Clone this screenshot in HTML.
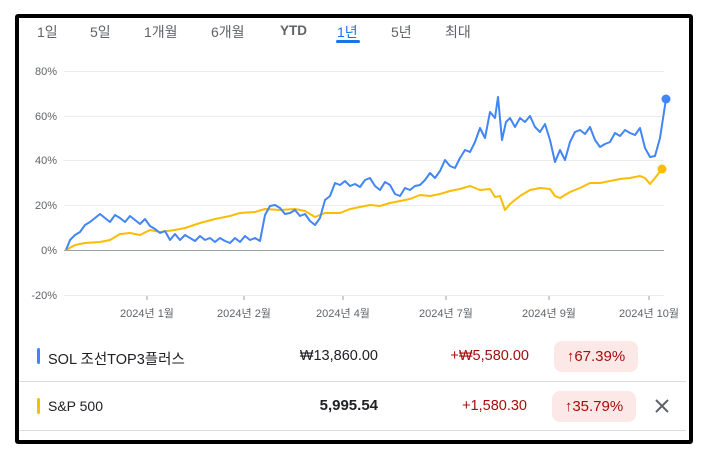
<!DOCTYPE html>
<html><head><meta charset="utf-8"><style>
body{margin:0;width:708px;height:459px;background:#fff;font-family:"Liberation Sans","Noto Sans CJK KR",sans-serif;position:relative;overflow:hidden}
.frame{position:absolute;left:15px;top:14px;width:670px;height:422px;border:4px solid #000;border-radius:3px;background:#fff}
.t{position:absolute;top:22px;font-size:14px;color:#5f6368}
.sel{color:#1a73e8}
.ul{position:absolute;left:336px;top:40px;width:24px;height:3px;background:#1a73e8;border-radius:2px}
.r{position:absolute;font-size:14.5px;color:#202124}
.red{color:#a50e0e}
.badge{position:absolute;width:84px;height:31px;background:#fce8e6;border-radius:8px;color:#a50e0e;font-size:15px;line-height:31px;text-align:center}
.sep{position:absolute;left:19px;width:667px;height:1px;background:#dadce0}
</style></head><body>
<div class="frame"></div>
<span class="t" style="left:37px">1일</span>
<span class="t" style="left:90px">5일</span>
<span class="t" style="left:144px">1개월</span>
<span class="t" style="left:211px">6개월</span>
<span class="t" style="left:280px;top:23px;font-weight:bold;font-size:13.5px">YTD</span>
<span class="t sel" style="left:337px">1년</span>
<span class="t" style="left:391px">5년</span>
<span class="t" style="left:445px">최대</span>
<div class="ul"></div>
<svg style="position:absolute;left:0;top:0" width="708" height="340">
<g stroke="#ececec" stroke-width="1">
<line x1="64" y1="71.5" x2="664" y2="71.5"/><line x1="64" y1="116.5" x2="664" y2="116.5"/><line x1="64" y1="160.5" x2="664" y2="160.5"/><line x1="64" y1="205.5" x2="664" y2="205.5"/><line x1="64" y1="295.5" x2="664" y2="295.5"/>
</g>
<line x1="64" y1="250.5" x2="664" y2="250.5" stroke="#9aa0a6"/>
<g stroke="#9aa0a6"><line x1="147" y1="296" x2="147" y2="300"/><line x1="244" y1="296" x2="244" y2="300"/><line x1="343" y1="296" x2="343" y2="300"/><line x1="446" y1="296" x2="446" y2="300"/><line x1="549" y1="296" x2="549" y2="300"/><line x1="649" y1="296" x2="649" y2="300"/></g>
<g font-size="11" fill="#5f6368" font-family="Liberation Sans,Noto Sans CJK KR,sans-serif">
<text x="57" y="75" text-anchor="end">80%</text><text x="57" y="120" text-anchor="end">60%</text><text x="57" y="164" text-anchor="end">40%</text><text x="57" y="209" text-anchor="end">20%</text><text x="57" y="254" text-anchor="end">0%</text><text x="57" y="299" text-anchor="end">-20%</text>
<g text-anchor="middle"><text x="147" y="317">2024년 1월</text><text x="244" y="317">2024년 2월</text><text x="343" y="317">2024년 4월</text><text x="446" y="317">2024년 7월</text><text x="549" y="317">2024년 9월</text><text x="649" y="317">2024년 10월</text></g>
</g>
<polyline fill="none" stroke="#fbbc04" stroke-width="2" stroke-linejoin="round" points="66,250 75,245 85,243 100,242 110,240 120,234 130,233 140,235 150,230 160,232 175,230 185,228 200,223 215,219 230,216 240,213 255,212 265,209 280,210 295,209 305,211 315,217 325,213 340,213 350,209 360,207 370,205 380,206 390,203 400,201 410,199 420,195 430,196 440,194 450,191 460,189 470,186 480,190 490,189 495,197 500,196 505,210 510,204 520,196 530,190 540,188 550,189 555,196 560,198 570,192 580,188 590,183 600,183 610,181 620,179 630,178 640,176 645,178 650,184 655,178 662,169"/>
<polyline fill="none" stroke="#4285f4" stroke-width="2" stroke-linejoin="round" points="66,250 70,240 75,235 80,232 85,225 90,222 95,218 100,214 105,218 110,222 115,215 120,218 125,222 130,216 135,220 140,224 145,219 150,226 155,229 160,233 165,231 170,240 175,234 180,240 185,235 190,238 195,241 200,236 205,240 210,238 215,242 220,238 225,241 230,243 235,238 240,242 245,236 250,240 255,238 260,241 265,215 270,206 275,205 280,208 285,214 290,213 295,210 300,216 305,214 310,221 315,225 320,218 325,200 330,196 335,183 340,185 345,181 350,186 355,184 360,187 365,180 370,178 375,186 380,190 385,182 390,185 395,194 400,196 405,188 410,190 415,186 420,185 425,180 430,173 435,178 440,171 445,160 450,166 455,168 460,158 465,150 470,152 475,142 480,128 485,138 490,112 495,118 498,97 502,140 506,122 510,118 515,127 520,118 525,122 530,116 535,127 540,132 545,124 550,140 555,162 560,150 565,160 570,142 575,132 580,130 585,134 590,127 595,140 600,147 605,144 610,142 615,133 620,136 625,130 630,133 635,135 640,128 645,148 650,157 655,156 660,138 666,99"/>
<circle cx="666" cy="99" r="4.5" fill="#4285f4"/>
<circle cx="662" cy="169" r="4.5" fill="#fbbc04"/>
</svg>
<div style="position:absolute;left:37px;top:348px;width:3px;height:16px;background:#4285f4;border-radius:2px"></div>
<span class="r" style="left:48px;top:348px">SOL 조선TOP3플러스</span>
<span class="r" style="right:330px;top:348px">₩13,860.00</span>
<span class="r red" style="right:179px;top:348px">+₩5,580.00</span>
<div class="badge" style="left:554px;top:341px">↑67.39%</div>
<div class="sep" style="top:381px"></div>
<div style="position:absolute;left:37px;top:398px;width:3px;height:16px;background:#fbbc04;border-radius:2px"></div>
<span class="r" style="left:48px;top:398px;font-size:14px">S&amp;P 500</span>
<span class="r" style="right:330px;top:397px;font-weight:bold;font-size:15px">5,995.54</span>
<span class="r red" style="right:181px;top:398px">+1,580.30</span>
<div class="badge" style="left:552px;top:391px">↑35.79%</div>
<svg style="position:absolute;left:654px;top:398px" width="16" height="16"><path d="M2 2L14 14M14 2L2 14" stroke="#5f6368" stroke-width="2"/></svg>
<div class="sep" style="top:430px"></div>
</body></html>
